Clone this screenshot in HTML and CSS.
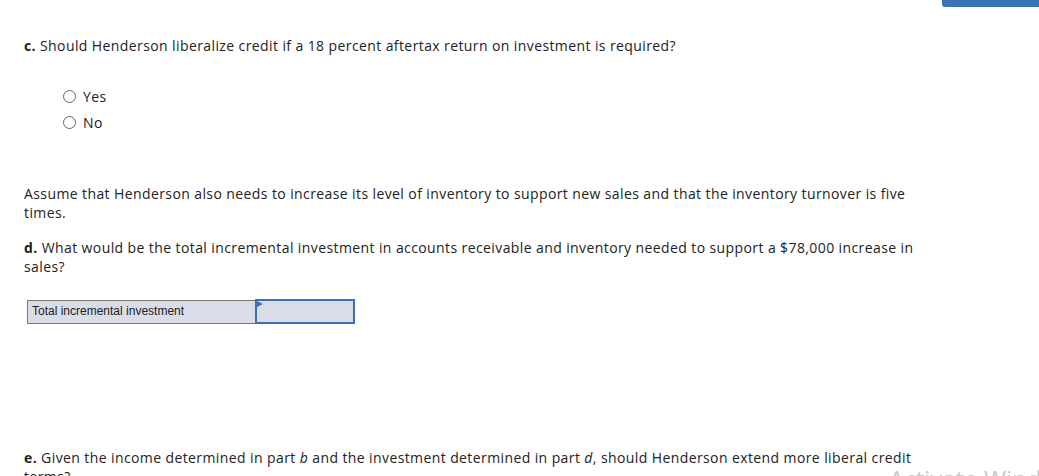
FILE: index.html
```html
<!DOCTYPE html>
<html lang="en">
<head>
    <meta charset="UTF-8">
    <title>Henderson credit policy</title>
    <link rel="stylesheet" href="styles.css">
</head>
<body>
<div class="topbar"></div>

<div class="question">
    <p class="prompt"><b>c.</b> Should Henderson liberalize credit if a 18 percent aftertax return on investment is required?</p>
    <div class="choices">
        <label class="choice"><span class="radio"></span>Yes</label>
        <label class="choice"><span class="radio"></span>No</label>
    </div>

    <p class="intro">Assume that Henderson also needs to increase its level of inventory to support new sales and that the inventory turnover is five times.</p>

    <p class="prompt part-d"><b>d.</b> What would be the total incremental investment in accounts receivable and inventory needed to support a $78,000 increase in sales?</p>

    <table class="answer">
        <tr>
            <td class="lbl">Total incremental investment</td>
            <td class="val"><span class="flag"></span></td>
        </tr>
    </table>

    <p class="prompt last"><b>e.</b> Given the income determined in part <i>b</i> and the investment determined in part <i>d</i>, should Henderson extend more liberal credit terms?</p>
</div>

<div class="watermark">Activate Windows</div>
</body>
</html>
```

FILE: styles.css
```css
body {
    margin: 0;
    font-family: "Open Sans", "Liberation Sans", sans-serif;
    font-size: 14px;
    color: #222;
    background: #fff;
    overflow: hidden;
}

.topbar {
    position: absolute;
    top: 0;
    right: 0;
    width: 97px;
    height: 7px;
    background: #3b73b9;
    border-bottom-left-radius: 3px;
}

.question {
    padding: 36px 0 0 24px;
    width: 905px;
    line-height: 19px;
    letter-spacing: 0.4px;
}

.question p {
    margin: 0;
}

.question b {
    font-weight: 700;
}

.choices {
    display: flex;
    flex-direction: column;
    gap: 7px;
    padding: 32px 0 0 39px;
}

.choice {
    display: flex;
    align-items: center;
    height: 19px;
}

.radio {
    width: 11px;
    height: 11px;
    border: 1px solid #666;
    border-radius: 50%;
    margin-right: 7px;
}

.intro {
    padding-top: 52px;
}

.part-d {
    padding-top: 16px;
}

.answer {
    border-collapse: collapse;
    margin: 23px 0 0 3px;
    font-family: "Liberation Sans", Arial, sans-serif;
    font-size: 12px;
    letter-spacing: 0;
    color: #222;
}

.answer td {
    height: 21px;
    padding: 0;
    background: #d9dde7;
}

.lbl {
    width: 223px;
    border: 1px solid #777;
    padding-left: 4px !important;
}

.val {
    position: relative;
    width: 96px;
    border: 2px solid #3c70b5;
}

.flag {
    position: absolute;
    top: 0;
    left: 0;
    width: 0;
    height: 0;
    border-top: 3px solid transparent;
    border-bottom: 3px solid transparent;
    border-left: 6px solid #3c70b5;
}

.last {
    padding-top: 124px;
}

.watermark {
    position: absolute;
    left: 889px;
    top: 462px;
    font-family: "Open Sans", "Liberation Sans", sans-serif;
    font-size: 24px;
    color: #c8c8c8;
    white-space: nowrap;
}
```
